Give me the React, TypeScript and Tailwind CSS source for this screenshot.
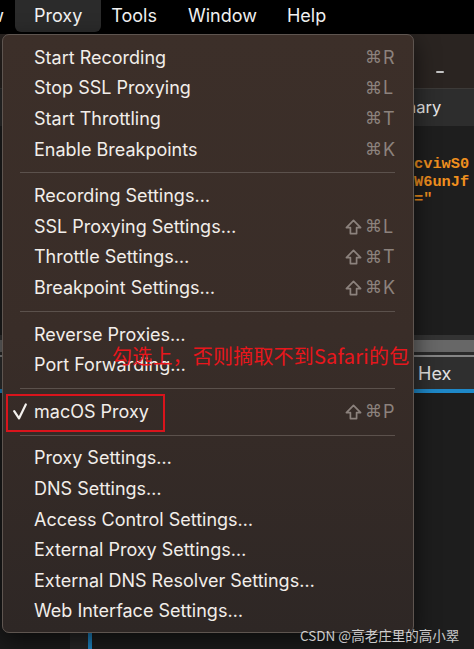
import React from "react";

type Row =
  | { kind: "sep" }
  | { kind: "item"; label: string; shift?: boolean; key?: string; checked?: boolean };

const rows: Row[] = [
  { kind: "item", label: "Start Recording", key: "R" },
  { kind: "item", label: "Stop SSL Proxying", key: "L" },
  { kind: "item", label: "Start Throttling", key: "T" },
  { kind: "item", label: "Enable Breakpoints", key: "K" },
  { kind: "sep" },
  { kind: "item", label: "Recording Settings…" },
  { kind: "item", label: "SSL Proxying Settings…", shift: true, key: "L" },
  { kind: "item", label: "Throttle Settings…", shift: true, key: "T" },
  { kind: "item", label: "Breakpoint Settings…", shift: true, key: "K" },
  { kind: "sep" },
  { kind: "item", label: "Reverse Proxies…" },
  { kind: "item", label: "Port Forwarding…" },
  { kind: "sep" },
  { kind: "item", label: "macOS Proxy", shift: true, key: "P", checked: true },
  { kind: "sep" },
  { kind: "item", label: "Proxy Settings…" },
  { kind: "item", label: "DNS Settings…" },
  { kind: "item", label: "Access Control Settings…" },
  { kind: "item", label: "External Proxy Settings…" },
  { kind: "item", label: "External DNS Resolver Settings…" },
  { kind: "item", label: "Web Interface Settings…" },
];

function Check() {
  return (
    <svg width="14" height="17" viewBox="0 0 14 17" fill="none">
      <path d="M1.2 8.2 L6 15.4 L12.8 1.4" stroke="#f4f1ee" strokeWidth="2.2" strokeLinecap="round" strokeLinejoin="round" />
    </svg>
  );
}

function ShiftIcon() {
  return (
    <svg width="17" height="16" viewBox="0 0 17 16" fill="none">
      <path
        d="M8.5 1.3 L15.6 8.6 H11.6 V14.6 H5.4 V8.6 H1.4 Z"
        stroke="#8c827d"
        strokeWidth="1.7"
        strokeLinejoin="round"
      />
    </svg>
  );
}

function Shortcut({ shift, k }: { shift?: boolean; k: string }) {
  return (
    <div className="flex items-center text-[#8c827d]">
      {shift ? (
        <span className="flex w-[20px] items-center">
          <ShiftIcon />
        </span>
      ) : null}
      <span className="w-[18px] text-[17px] leading-none [font-family:'DejaVu_Sans',sans-serif]">⌘</span>
      <span className="w-[14px] text-[18px] leading-none">{k}</span>
    </div>
  );
}

export default function App() {
  return (
    <div className="relative w-[474px] h-[649px] overflow-hidden bg-[#1e1e1e] [font-family:Inter,'Noto_Sans',sans-serif]">
      {/* macOS menu bar */}
      <div className="flex h-[34px] items-start bg-black text-[18px] text-[#f2f2f2]">
        <div className="flex h-[32px] w-[15px] items-center justify-end overflow-hidden pb-[2px]">
          <span className="mr-[11px] shrink-0">View</span>
        </div>
        <span className="flex h-[32px] items-center rounded-b-[6px] bg-[#2b2b2b] px-[19px] pb-[2px]">Proxy</span>
        <span className="ml-[10px] flex h-[32px] items-center pb-[2px]">Tools</span>
        <span className="ml-[31px] flex h-[32px] items-center pb-[2px]">Window</span>
        <span className="ml-[30px] flex h-[32px] items-center pb-[2px]">Help</span>
      </div>

      {/* background application */}
      <div className="flex flex-col">
        <div className="h-[54px] bg-[#2a2421] pl-[436px] pt-[37px]">
          <div className="h-[2px] w-[8px] rounded-full bg-[#c4c4c4]" />
        </div>
        <div className="h-px bg-[#3c3a38]" />
        <div className="flex h-[37px] items-center bg-[#2d2d2d] pl-[367px] text-[16.5px] text-[#e8e8e8]">Summary</div>
        <div className="h-[209px] bg-[#1e1e1e] pl-[359px] pt-[30px] [font-family:'Liberation_Mono',monospace] text-[15.3px] font-bold leading-[17.5px] text-[#f0901e] whitespace-nowrap">
          <div>Rq7ZkecviwS0</div>
          <div>p3XbQaW6unJf</div>
          <div>0m2dA9="</div>
        </div>
        <div className="h-[5px] bg-[#333333]" />
        <div className="h-[12px] bg-[#676767]" />
        <div className="h-[3px] bg-[#2a2a2a]" />
        <div className="h-[2px] bg-[#858585]" />
        <div className="flex h-[32px] items-center bg-[#2f2f2f] pl-[418px] text-[18px] text-[#e2e2e2]">Hex</div>
        <div className="h-[4px] bg-[#1e88c8]" />
        <div className="flex h-[260px]">
          <div className="w-[70px] bg-[#1b1b1b]" />
          <div className="w-[18px] bg-[#282828]" />
          <div className="w-[4px] bg-[#1e88c8]" />
          <div className="flex-1 bg-[#1d1d1d]" />
        </div>
      </div>

      {/* Proxy menu */}
      <div className="absolute left-[2px] top-[34px] h-[599px] w-[412px] rounded-[7px] border border-[#5e5550] bg-linear-to-b from-[#3c2f29] via-[#392d28] to-[#2e2725] pt-[7.5px] pb-[5px] shadow-[0_8px_24px_rgba(0,0,0,0.6)]">
        {rows.map((r, i) =>
          r.kind === "sep" ? (
            <div key={i} className="flex h-[16px] items-center pl-[17px] pr-[18px]">
              <div className="h-px w-full bg-[#5b514c]" />
            </div>
          ) : (
            <div key={i} className="flex h-[30.6px] items-center pr-[16px] text-[18px] text-[#f2eeea]">
              <div className="flex w-[31px] items-center pl-[10px]">{r.checked ? <Check /> : null}</div>
              <div className="flex-1 whitespace-nowrap leading-none">{r.label}</div>
              {r.key ? <Shortcut shift={r.shift} k={r.key} /> : null}
            </div>
          )
        )}
      </div>

      {/* annotation */}
      <div className="absolute left-[6px] top-[394px] h-[38px] w-[159px] border-2 border-[#d9141c]" />
      <div className="absolute left-[112px] top-[346px] whitespace-nowrap text-[20px] leading-[20px] tracking-[0.2px] text-[#e8161c] [font-family:'Noto_Sans_CJK_SC','Noto_Sans',sans-serif]">
        勾选上，否则摘取不到Safari的包
      </div>

      {/* watermark */}
      <div className="absolute left-[300px] top-[626px] whitespace-nowrap text-[13.5px] leading-[18px] text-[rgba(255,255,255,0.78)] [font-family:'Noto_Sans_CJK_SC',sans-serif]">
        CSDN @高老庄里的高小翠
      </div>
    </div>
  );
}
